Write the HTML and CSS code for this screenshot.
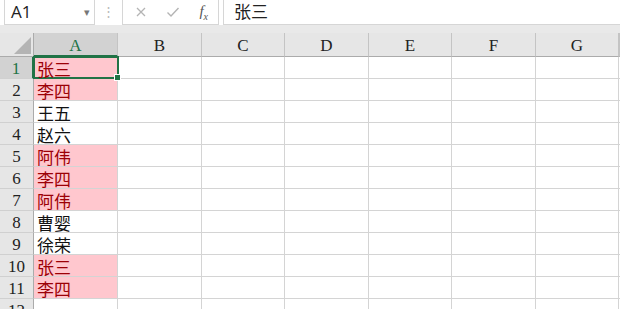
FILE: index.html
```html
<!DOCTYPE html>
<html lang="zh-CN">
<head>
    <meta charset="UTF-8">
    <title>Sheet1</title>
    <link rel="stylesheet" href="styles.css">
</head>
<body>
    <div class="formula-bar">
        <div class="name-box">
            <span>A1</span>
            <span class="drop">&#9662;</span>
        </div>
        <div class="grip">&#8942;</div>
        <div class="fx-box">
            <svg width="12" height="12" viewBox="0 0 12 12"><path d="M2 2 L10 10 M10 2 L2 10" stroke="#b4b4b4" stroke-width="1.3" fill="none"/></svg>
            <svg width="14" height="12" viewBox="0 0 14 12"><path d="M1.5 6.5 L5 10 L12.5 2" stroke="#b4b4b4" stroke-width="1.4" fill="none"/></svg>
            <span class="fx"><i>f</i><sub>x</sub></span>
        </div>
        <div class="input-box">张三</div>
    </div>
    <div class="gap"></div>

    <div class="sheet">
        <div class="hd corner"><span class="tri"></span></div>
        <div class="hd col active">A</div>
        <div class="hd col">B</div>
        <div class="hd col">C</div>
        <div class="hd col">D</div>
        <div class="hd col">E</div>
        <div class="hd col">F</div>
        <div class="hd col">G</div>
        <div class="hd col"></div>
    </div>
    <div id="rows"></div>

    <script>
        var names = ["张三", "李四", "王五", "赵六", "阿伟", "李四", "阿伟", "曹婴", "徐荣", "张三", "李四", ""];
        var dup = [true, true, false, false, true, true, true, false, false, true, true, false];
        var html = "";
        for (var i = 0; i < names.length; i++) {
            html += '<div class="sheet">';
            html += '<div class="hd row' + (i == 0 ? ' active' : '') + '">' + (i + 1) + '</div>';
            html += '<div class="cell' + (dup[i] ? ' dup' : '') + (i == 0 ? ' selected' : '') + '"><span>' + names[i] + '</span></div>';
            for (var c = 0; c < 7; c++) {
                html += '<div class="cell"></div>';
            }
            html += '</div>';
        }
        document.getElementById("rows").innerHTML = html;
    </script>
</body>
</html>
```

FILE: styles.css
```css
* {
    box-sizing: border-box;
}

body {
    margin: 0;
    width: 620px;
    height: 309px;
    overflow: hidden;
    background: #fff;
    font-family: "Liberation Serif", "Noto Sans CJK SC", serif;
}

.formula-bar {
    display: flex;
    height: 25px;
    background: #fff;
    padding-left: 4px;
}

.name-box {
    width: 91px;
    height: 25px;
    border: 1px solid #d6d6d6;
    border-top: none;
    display: flex;
    align-items: center;
    justify-content: space-between;
    padding: 0 4px 1px 6px;
    font-family: "Open Sans", "Liberation Sans", sans-serif;
    font-size: 17px;
    color: #222;
}

.drop {
    font-size: 11px;
    color: #777;
}

.grip {
    width: 27px;
    text-align: center;
    color: #b8b8b8;
    font-size: 13px;
    line-height: 23px;
}

.fx-box {
    width: 97px;
    height: 25px;
    border: 1px solid #d6d6d6;
    border-top: none;
    display: flex;
    align-items: center;
    justify-content: space-between;
    padding: 0 10px 0 12px;
}

.fx {
    font-family: "Liberation Serif", serif;
    font-size: 15px;
    color: #555;
}

.fx sub {
    font-size: 10px;
    font-style: italic;
}

.input-box {
    flex: 1;
    height: 25px;
    margin-left: 4px;
    border: 1px solid #d6d6d6;
    border-top: none;
    border-right: none;
    padding-left: 10px;
    font-family: "Noto Sans CJK SC", sans-serif;
    font-size: 17px;
    line-height: 21px;
    color: #222;
}

.gap {
    height: 8px;
    background: #e9e9e9;
}

.sheet {
    display: grid;
    grid-template-columns: 34px 84px 84px 83px 84px 83px 84px 83px 1fr;
}

.hd {
    background: #e6e6e6;
    color: #222;
    font-size: 17px;
    text-align: center;
    border-right: 1px solid #c4c4c4;
    border-bottom: 1px solid #c4c4c4;
}

.hd.col {
    height: 24px;
    line-height: 25px;
    border-bottom: 1px solid #ababab;
}

.hd.col.active {
    background: #d2d2d2;
    color: #217346;
    border-bottom: 2px solid #217346;
}

.corner {
    position: relative;
    border-right-color: #ababab;
    border-bottom-color: #ababab;
}

.tri {
    position: absolute;
    right: 2px;
    bottom: 2px;
    width: 0;
    height: 0;
    border-left: 17px solid transparent;
    border-bottom: 17px solid #b4b4b4;
}

.hd.row {
    height: 22px;
    line-height: 23px;
    border-right: 1px solid #ababab;
    border-bottom: 1px solid #d0d0d0;
}

.hd.row.active {
    background: #d2d2d2;
    color: #217346;
    border-right: 2px solid #217346;
}

.cell {
    height: 22px;
    border-right: 1px solid #d4d4d4;
    border-bottom: 1px solid #d4d4d4;
    padding-left: 3px;
    display: flex;
    align-items: center;
    font-family: "Noto Sans CJK SC", sans-serif;
    font-size: 17px;
    color: #111;
    white-space: nowrap;
}

.cell span {
    line-height: 17px;
    margin-top: 1px;
}

.cell.dup {
    background: #ffc7ce;
    color: #9c0006;
}

.cell.selected {
    position: relative;
    border: 2px solid #217346;
    margin: -1px 0 0 -1px;
    width: 86px;
    height: 23px;
    padding-left: 2px;
}

.cell.selected::after {
    content: "";
    position: absolute;
    right: -4px;
    bottom: -4px;
    width: 5px;
    height: 5px;
    background: #217346;
    border: 1px solid #fff;
}
```
